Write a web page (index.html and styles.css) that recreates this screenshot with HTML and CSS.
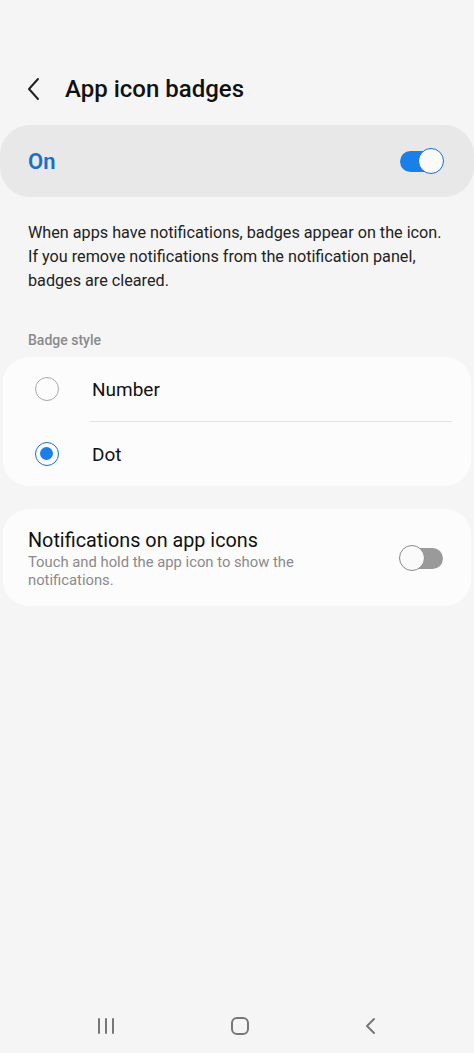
FILE: index.html
```html
<!DOCTYPE html>
<html lang="en">
<head>
    <meta charset="UTF-8">
    <meta name="viewport" content="width=device-width, initial-scale=1.0">
    <title>App icon badges</title>
    <link rel="stylesheet" href="styles.css">
</head>
<body>
<div class="screen">

    <!-- Top bar -->
    <header class="top-bar">
        <button class="back-btn" aria-label="Back">
            <svg width="16" height="24" viewBox="0 0 16 24"><path d="M12 2 L3 12 L12 22" fill="none" stroke="#222" stroke-width="2" stroke-linecap="round" stroke-linejoin="round"/></svg>
        </button>
        <h1 class="title">App icon badges</h1>
    </header>

    <!-- Master switch -->
    <div class="master">
        <span class="master-label">On</span>
        <span class="switch on"><span class="knob"></span></span>
    </div>

    <p class="description">When apps have notifications, badges appear on the icon. If you remove notifications from the notification panel, badges are cleared.</p>

    <div class="section-title">Badge style</div>

    <!-- Badge style options -->
    <div class="card">
        <label class="option">
            <span class="radio"></span>
            <span class="option-text">Number</span>
        </label>
        <div class="divider"></div>
        <label class="option">
            <span class="radio checked"></span>
            <span class="option-text">Dot</span>
        </label>
    </div>

    <div class="card setting">
        <div class="setting-text">
            <div class="setting-title">Notifications on app icons</div>
            <div class="setting-sub">Touch and hold the app icon to show the notifications.</div>
        </div>
        <span class="switch"><span class="knob"></span></span>
    </div>

    <div class="spacer"></div>

    <!-- Navigation bar -->
    <nav class="nav-bar">
        <svg width="18" height="16" viewBox="0 0 18 16"><path d="M2 1 V15 M9 1 V15 M16 1 V15" stroke="#777" stroke-width="2" stroke-linecap="round"/></svg>
        <svg width="20" height="20" viewBox="0 0 20 20"><rect x="2" y="2" width="16" height="16" rx="5" fill="none" stroke="#777" stroke-width="2"/></svg>
        <svg width="14" height="18" viewBox="0 0 14 18"><path d="M10 2 L3 9 L10 16" fill="none" stroke="#777" stroke-width="2" stroke-linecap="round" stroke-linejoin="round"/></svg>
    </nav>
</div>
</body>
</html>
```

FILE: styles.css
```css
/* Page */
html, body {
    margin: 0;
    padding: 0;
}

body {
    background-color: #f5f5f5;
    font-family: Roboto, "Noto Sans", sans-serif;
    color: #1c1c1c;
}

.screen {
    height: 1053px;
    display: flex;
    flex-direction: column;
}

/* Top bar */
.top-bar {
    display: flex;
    align-items: center;
    height: 54px;
    margin-top: 62px;
    padding-left: 26px;
}

.back-btn {
    background: none;
    border: none;
    padding: 0;
    width: 39px;
    height: 24px;
    text-align: left;
}

.title {
    margin: 0;
    font-size: 24px;
    font-weight: 500;
    color: #111;
}

/* Master switch */
.master {
    display: flex;
    align-items: center;
    justify-content: space-between;
    height: 72px;
    margin-top: 9px;
    padding: 0 31px 0 28px;
    background-color: #e8e8e8;
    border-radius: 30px;
}

.master-label {
    font-size: 22px;
    font-weight: 600;
    color: #1b6fc4;
}

/* Switches */
.switch {
    position: relative;
    width: 43px;
    height: 21px;
    border-radius: 11px;
    background-color: #9a9a9a;
}

.switch .knob {
    position: absolute;
    top: -3px;
    left: -1px;
    width: 24px;
    height: 24px;
    border-radius: 50%;
    background-color: #fafafa;
    border: 1.5px solid #8a8a8a;
}

.switch.on {
    background-color: #1a7fe9;
}

.switch.on .knob {
    left: auto;
    right: -1px;
    border-color: #1a6fc8;
}

/* Description */
.description {
    margin: 24px 28px 0;
    font-size: 16.2px;
    line-height: 24px;
    color: #222;
}

.section-title {
    margin: 39px 28px 9px;
    font-size: 14px;
    font-weight: 500;
    color: #8a8a8a;
}

/* Cards */
.card {
    margin: 0 3px;
    background-color: #fcfcfc;
    border-radius: 26px;
}

.option {
    display: flex;
    align-items: center;
    height: 64px;
    padding-left: 32px;
}

.radio {
    box-sizing: border-box;
    width: 24px;
    height: 24px;
    border-radius: 50%;
    border: 1.5px solid #a8a8a8;
    margin-right: 33px;
    position: relative;
}

.radio.checked {
    border-color: #1a6fc8;
}

.radio.checked::after {
    content: "";
    position: absolute;
    top: 4px;
    left: 4px;
    width: 13px;
    height: 13px;
    border-radius: 50%;
    background-color: #1a7fe9;
}

.option-text {
    font-size: 19px;
    color: #111;
}

.divider {
    height: 1px;
    margin: 0 19px 0 87px;
    background-color: #e4e4e4;
}

.setting {
    display: flex;
    align-items: center;
    justify-content: space-between;
    margin-top: 23px;
    padding: 19px 28px 17px 25px;
}

.setting-text {
    max-width: 300px;
}

.setting-title {
    font-size: 19.8px;
    color: #111;
    line-height: 26px;
}

.setting-sub {
    font-size: 14.8px;
    line-height: 18px;
    color: #8a8a8a;
    margin-top: -1px;
}

.spacer {
    flex: 1;
}

/* Navigation bar */
.nav-bar {
    display: flex;
    align-items: center;
    justify-content: space-between;
    height: 48px;
    padding: 0 96px 0 97px;
    margin-bottom: 3px;
}
```
